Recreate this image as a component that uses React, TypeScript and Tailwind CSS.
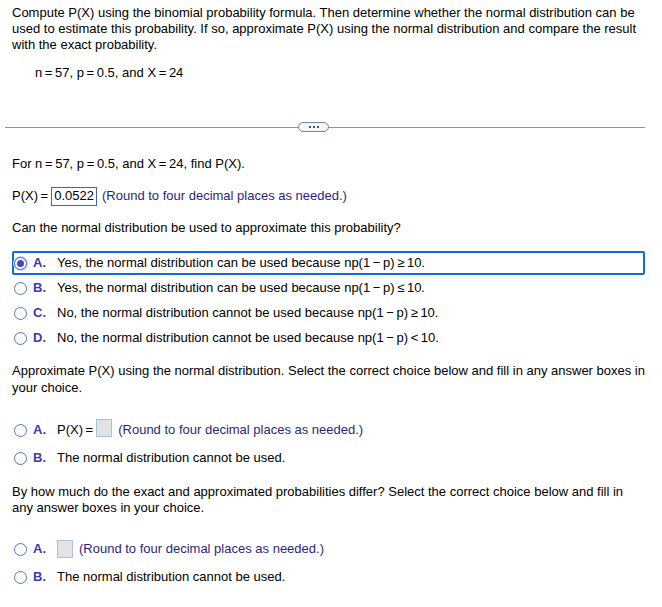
import React from 'react';

const LABEL = 'text-[#3b3bb0] font-bold';
const HINT = 'text-[#2c1f7c]';
const T = '\u2009';

function Radio({ checked = false }: { checked?: boolean }) {
  return (
    <span
      className={
        'flex h-[13px] w-[13px] shrink-0 items-center justify-center rounded-full border-[1.5px] bg-white ' +
        (checked ? 'border-[#4a5fd0] shadow-[0_0_0_1px_#c9d4f2]' : 'border-[#4d78cc]')
      }
    >
      {checked && <span className="h-[7px] w-[7px] rounded-full bg-[#4646c8]" />}
    </span>
  );
}

function Choice({
  letter,
  checked = false,
  selected = false,
  children,
}: {
  letter: string;
  checked?: boolean;
  selected?: boolean;
  children: React.ReactNode;
}) {
  return (
    <div
      className={
        'ml-3 mr-[17px] flex h-6 items-center border-2 rounded-[2px] ' +
        (selected ? 'border-[#0b6fcf]' : 'border-transparent')
      }
    >
      <Radio checked={checked} />
      <span className={'ml-[6px] w-[24px] shrink-0 ' + LABEL}>{letter}.</span>
      <div className="flex items-center">{children}</div>
    </div>
  );
}

function EmptyBox() {
  return <span className="inline-block h-[18px] w-[16px] border border-[#a9c2e4] bg-[#e3e3e3]" />;
}

export default function App() {
  return (
    <div className="h-[607px] w-[662px] overflow-hidden bg-white font-['Liberation_Sans',Arial,sans-serif] text-[13px] leading-4 text-black">
      <p className="px-3 pt-[5px] pr-4">
        Compute P(X) using the binomial probability formula. Then determine whether the normal distribution can be
        used to estimate this probability. If so, approximate P(X) using the normal distribution and compare the result
        with the exact probability.
      </p>
      <p className="mt-3 pl-[35px]">
        n{T}={T}57, p{T}={T}0.5, and X{T}={T}24
      </p>

      <div className="mt-[41px] flex h-[10px] items-center pl-[5px]">
        <div className="h-px w-[293px] bg-[#8a93a3]" />
        <div className="flex h-[10px] w-[31px] items-center justify-center gap-[2px] rounded-full border border-[#7c8595] bg-[#f3f6fa]">
          <span className="h-[2px] w-[2px] bg-[#4b5563]" />
          <span className="h-[2px] w-[2px] bg-[#4b5563]" />
          <span className="h-[2px] w-[2px] bg-[#4b5563]" />
        </div>
        <div className="h-px w-[316px] bg-[#8a93a3]" />
      </div>

      <p className="mt-[24px] px-3">
        For n{T}={T}57, p{T}={T}0.5, and X{T}={T}24, find P(X).
      </p>
      <div className="mt-[14px] flex h-5 items-center px-3">
        <span>P(X){T}=</span>
        <span className="ml-[3px] flex h-[19px] items-center border border-[#3d62c4] px-[2px]">0.0522</span>
        <span className={'ml-[5px] ' + HINT}>(Round to four decimal places as needed.)</span>
      </div>
      <p className="mt-[14px] px-3">Can the normal distribution be used to approximate this probability?</p>

      <div className="mt-[15px] flex flex-col gap-px">
        <Choice letter="A" checked selected>
          Yes, the normal distribution can be used because np(1{T}−{T}p){T}≥{T}10.
        </Choice>
        <Choice letter="B">
          Yes, the normal distribution can be used because np(1{T}−{T}p){T}≤{T}10.
        </Choice>
        <Choice letter="C">
          No, the normal distribution cannot be used because np(1{T}−{T}p){T}≥{T}10.
        </Choice>
        <Choice letter="D">
          No, the normal distribution cannot be used because np(1{T}−{T}p){T}&lt;{T}10.
        </Choice>
      </div>

      <p className="mt-[12px] px-3 leading-[17px]">
        Approximate P(X) using the normal distribution. Select the correct choice below and fill in any answer boxes in
        your choice.
      </p>

      <div className="mt-[22px] flex flex-col gap-1">
        <Choice letter="A">
          <span>P(X){T}=</span>
          <span className="ml-[3px]">
            <EmptyBox />
          </span>
          <span className={'ml-[6px] ' + HINT}>(Round to four decimal places as needed.)</span>
        </Choice>
        <Choice letter="B">The normal distribution cannot be used.</Choice>
      </div>

      <p className="mt-[14px] pl-3 pr-[36px]">
        By how much do the exact and approximated probabilities differ? Select the correct choice below and fill in
        any answer boxes in your choice.
      </p>

      <div className="mt-[21px] flex flex-col gap-1">
        <Choice letter="A">
          <EmptyBox />
          <span className={'ml-[6px] ' + HINT}>(Round to four decimal places as needed.)</span>
        </Choice>
        <Choice letter="B">The normal distribution cannot be used.</Choice>
      </div>
    </div>
  );
}
